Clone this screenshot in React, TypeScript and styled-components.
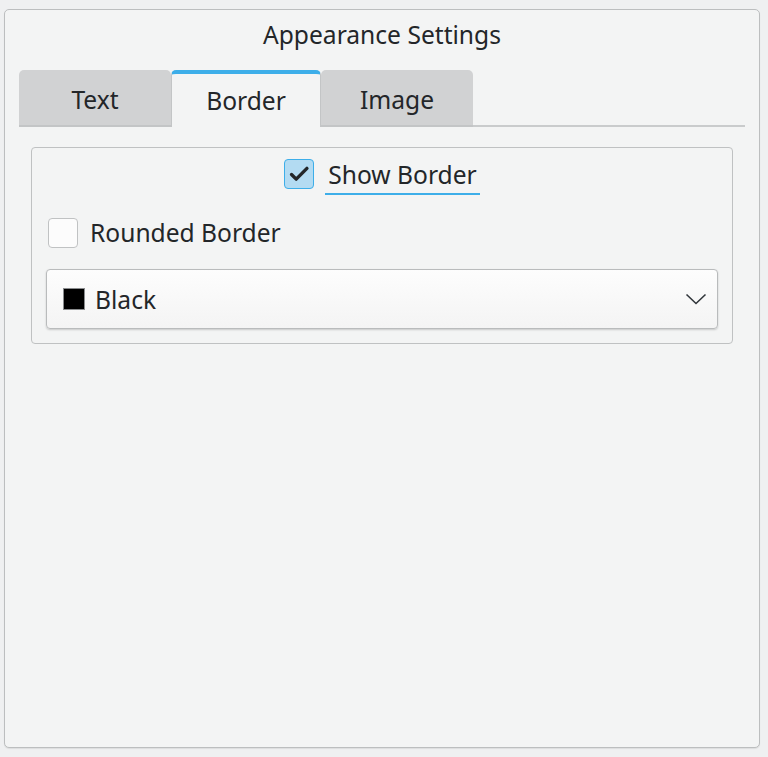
import * as React from "react";
import styled, { createGlobalStyle } from "styled-components";

const GlobalStyle = createGlobalStyle`
  html, body {
    margin: 0;
    padding: 0;
    background: #eff0f1;
  }
  body {
    font-family: "Noto Sans", "Open Sans", sans-serif;
    color: #232629;
  }
`;

const Page = styled.div`
  box-sizing: border-box;
  height: 757px;
  padding: 9px 8px 9px 4px;
  display: flex;
`;

const Frame = styled.div`
  flex: 1;
  display: flex;
  flex-direction: column;
  background: #f3f4f4;
  border: 1px solid #bcbebf;
  border-radius: 5px;
  box-shadow: 0 1px 1px rgba(0, 0, 0, 0.08);
`;

const Title = styled.div`
  font-size: 24.6px;
  line-height: 32px;
  text-align: center;
  padding-top: 9px;
  margin-bottom: 19px;
`;

const TabBar = styled.div`
  display: flex;
  margin: 0 14px;
  height: 57px;
`;

const Tab = styled.div<{ $active?: boolean; $width: number }>`
  box-sizing: border-box;
  width: ${(p) => p.$width}px;
  display: flex;
  align-items: center;
  justify-content: center;
  font-size: 24.6px;
  padding-top: ${(p) => (p.$active ? "0" : "4px")};
  border-radius: 5px 5px 0 0;
  background: ${(p) => (p.$active ? "#f3f4f4" : "#d1d2d3")};
  border-top: ${(p) => (p.$active ? "4px solid #3daee9" : "none")};
  border-left: ${(p) => (p.$active ? "1px solid #c3c5c6" : "none")};
  border-right: ${(p) => (p.$active ? "1px solid #c3c5c6" : "none")};
  border-bottom: ${(p) => (p.$active ? "none" : "2px solid #c3c5c6")};
`;

const TabFill = styled.div`
  flex: 1;
  border-bottom: 2px solid #c9cbcc;
`;

const Group = styled.div`
  margin: 20px 26px 0;
  padding: 11px 14px 14px;
  border: 1px solid #bfc1c2;
  border-radius: 4px;
  display: flex;
  flex-direction: column;
`;

const CheckRow = styled.div<{ $center?: boolean }>`
  display: flex;
  align-items: ${(p) => (p.$center ? "flex-start" : "center")};
  justify-content: ${(p) => (p.$center ? "center" : "flex-start")};
  padding-left: ${(p) => (p.$center ? "0" : "2px")};
  gap: ${(p) => (p.$center ? "11px" : "9px")};
`;

const Box = styled.div<{ $checked?: boolean }>`
  box-sizing: border-box;
  width: 30px;
  height: 30px;
  border-radius: 4px;
  border: 1px solid ${(p) => (p.$checked ? "#3daee9" : "#c0c2c3")};
  background: ${(p) => (p.$checked ? "#b3dbf2" : "#fcfcfc")};
  display: flex;
  align-items: center;
  justify-content: center;
`;

const Label = styled.span<{ $focus?: boolean }>`
  font-size: 24.6px;
  line-height: 30px;
  padding: ${(p) => (p.$focus ? "1px 3px 3px" : "0 3px")};
  border-bottom: ${(p) => (p.$focus ? "2px solid #3daee9" : "none")};
`;

const Combo = styled.div`
  box-sizing: border-box;
  height: 60px;
  margin-top: 21px;
  padding: 0 10px 0 16px;
  display: flex;
  align-items: center;
  gap: 10px;
  border: 1px solid #b9bbbc;
  border-radius: 4px;
  background: linear-gradient(#fdfdfd, #f4f4f4);
  box-shadow: 0 1px 2px rgba(0, 0, 0, 0.18);
`;

const Swatch = styled.div`
  width: 22px;
  height: 22px;
  box-sizing: border-box;
  background: #000;
  border: 1px solid #8a8c8e;
`;

const ComboText = styled.span`
  flex: 1;
  font-size: 24.6px;
`;

const Check = () => (
  <svg width="30" height="30" viewBox="0 0 30 30">
    <polyline
      points="7,15.5 12,20.5 23.5,9"
      fill="none"
      stroke="#232629"
      strokeWidth="3.6"
      strokeLinecap="round"
      strokeLinejoin="round"
    />
  </svg>
);

const Chevron = () => (
  <svg width="22" height="12" viewBox="0 0 22 12">
    <polyline points="1.5,1.5 11,10.5 20.5,1.5" fill="none" stroke="#31363b" strokeWidth="1.6" />
  </svg>
);

export default function App() {
  return (
    <>
      <GlobalStyle />
      <Page>
        <Frame>
          <Title>Appearance Settings</Title>
          <TabBar>
            <Tab $width={152}>Text</Tab>
            <Tab $width={150} $active>
              Border
            </Tab>
            <Tab $width={152}>Image</Tab>
            <TabFill />
          </TabBar>
          <Group>
            <CheckRow $center>
              <Box $checked>
                <Check />
              </Box>
              <Label $focus>Show Border</Label>
            </CheckRow>
            <CheckRow style={{ marginTop: 23 }}>
              <Box />
              <Label>Rounded Border</Label>
            </CheckRow>
            <Combo>
              <Swatch />
              <ComboText>Black</ComboText>
              <Chevron />
            </Combo>
          </Group>
        </Frame>
      </Page>
    </>
  );
}
